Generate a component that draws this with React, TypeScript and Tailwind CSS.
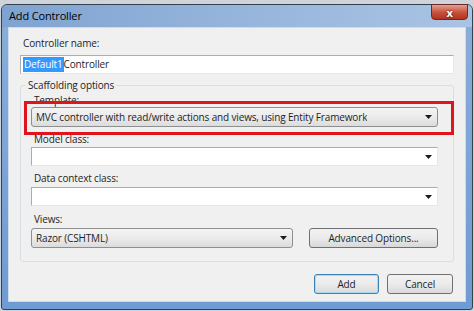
import React from 'react';

function Arrow() {
    return (
        <svg width="7" height="4" viewBox="0 0 7 4" className="shrink-0">
            <path d="M0 0 H7 L3.5 4 Z" fill="#1a1a1a" />
        </svg>
    );
}

function GrayCombo({ text, className }: { text: string; className: string }) {
    return (
        <div className={`flex items-center justify-between h-[20px] pl-[4px] pr-[5px] rounded-[3px] border border-[#8e8f8f] bg-gradient-to-b from-[#f4f4f4] via-[#ebebeb] to-[#dcdcdc] ${className}`}>
            <span className="truncate">{text}</span>
            <Arrow />
        </div>
    );
}

function WhiteCombo() {
    return (
        <div className="flex items-center justify-end h-[19px] pr-[5px] border border-[#abadb3] border-r-[#e3e9ef] border-b-[#e3e9ef] bg-white">
            <Arrow />
        </div>
    );
}

function Label({ children, className = '' }: { children: React.ReactNode; className?: string }) {
    return <div className={`h-[13px] leading-[13px] pl-[3px] text-[#1e1e1e] ${className}`}>{children}</div>;
}

export default function App() {
    return (
        <div
            className="w-[474px] h-[311px] overflow-hidden bg-[#cfd4da] pt-[4px] pl-[1px] text-[10px] tracking-[-0.15px] text-[#1e1e1e]"
            style={{ fontFamily: '"Open Sans", "Noto Sans", sans-serif' }}
        >
            <div className="relative w-[472px] h-[306px] flex flex-col rounded-t-[6px] rounded-b-[3px] border border-[#34404c] bg-gradient-to-b from-[#8aaed8] to-[#6f9bd3]">
                {/* title bar */}
                <div className="h-[22px] flex items-center pl-[7px] bg-gradient-to-r from-[#7fa3d0] via-[#96b5dc] to-[#a9c3e3] rounded-t-[5px]">
                    <span className="text-[11px] text-black">Add Controller</span>
                </div>
                <div className="absolute right-[4px] top-[-1px] w-[37px] h-[16px] flex items-center justify-center rounded-b-[4px] border border-[#6b2a24] bg-gradient-to-b from-[#e3a093] via-[#c8533f] to-[#b5321c]">
                    <span className="text-white text-[11px] font-bold leading-none [text-shadow:0_0_2px_#3a0f0a]">x</span>
                </div>

                {/* content */}
                <div className="mx-[6px] h-[275px] flex flex-col px-[11px] bg-[#f0f0f0] border border-[#cddbea]">
                    <div className="pt-[8px] h-[23px] leading-[15px]">
                        <span className="pl-[3px]">Controller name:</span>
                    </div>
                    <div className="mt-[4px] h-[19px] flex items-center pl-[2px] bg-white border border-[#abadb3] border-r-[#e3e9ef] border-b-[#e3e9ef]">
                        <span className="bg-[#3399ff] text-white px-[1px]">Default1</span>
                        <span>Controller</span>
                    </div>

                    {/* scaffolding options group */}
                    <div className="relative mt-[11px] border border-[#d5dfe5] rounded-[3px] pl-[10px] pr-[15px] pt-[8px] pb-[13px]">
                        <span className="absolute left-[5px] top-[-8px] px-[2px] bg-[#f0f0f0] leading-[15px]">Scaffolding options</span>
                        <Label>Template:</Label>
                        <GrayCombo text="MVC controller with read/write actions and views, using Entity Framework" className="" />
                        <Label className="mt-[6px]">Model class:</Label>
                        <div className="mt-[1px]"><WhiteCombo /></div>
                        <Label className="mt-[6px]">Data context class:</Label>
                        <div className="mt-[2px]"><WhiteCombo /></div>
                        <Label className="mt-[7px]">Views:</Label>
                        <div className="mt-[2px] flex gap-[16px]">
                            <GrayCombo text="Razor (CSHTML)" className="w-[262px]" />
                            <button className="flex-1 h-[20px] rounded-[3px] border border-[#707070] bg-gradient-to-b from-[#f2f2f2] via-[#ebebeb] to-[#d8d8d8]">
                                Advanced Options...
                            </button>
                        </div>
                        {/* red annotation */}
                        <div className="absolute left-[3px] top-[15px] w-[430px] h-[34px] border-[3px] border-[#e0141c]" />
                    </div>

                    <div className="mt-[12px] flex justify-end gap-[8px] pr-[1px]">
                        <button className="w-[65px] h-[20px] rounded-[3px] border border-[#3c7fb1] shadow-[inset_0_0_0_1px_#a8dcf4] bg-gradient-to-b from-[#f2f2f2] via-[#ebebeb] to-[#dadada]">
                            Add
                        </button>
                        <button className="w-[66px] h-[20px] rounded-[3px] border border-[#707070] bg-gradient-to-b from-[#f2f2f2] via-[#ebebeb] to-[#dadada]">
                            Cancel
                        </button>
                    </div>
                </div>
            </div>
        </div>
    );
}
